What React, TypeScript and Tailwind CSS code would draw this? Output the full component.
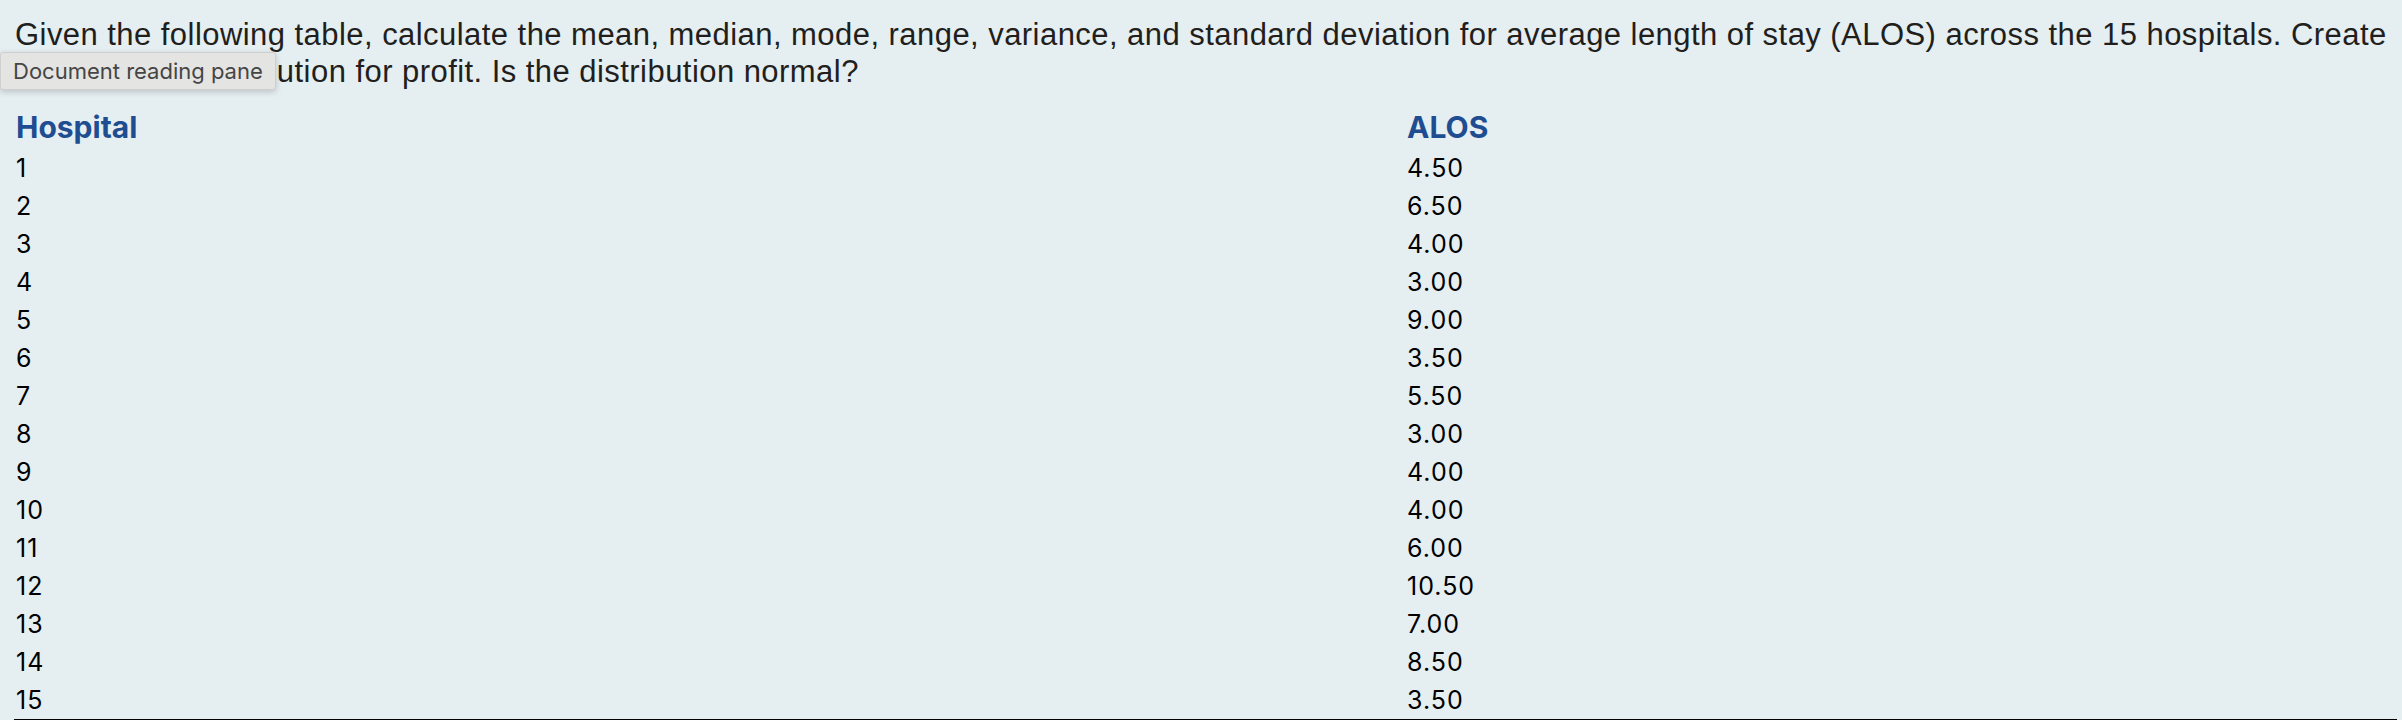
import React from "react";

const rows: [string, string][] = [
  ["1", "4.50"],
  ["2", "6.50"],
  ["3", "4.00"],
  ["4", "3.00"],
  ["5", "9.00"],
  ["6", "3.50"],
  ["7", "5.50"],
  ["8", "3.00"],
  ["9", "4.00"],
  ["10", "4.00"],
  ["11", "6.00"],
  ["12", "10.50"],
  ["13", "7.00"],
  ["14", "8.50"],
  ["15", "3.50"],
];

export default function App() {
  return (
    <div className="relative w-[2402px] h-[720px] overflow-hidden bg-[#e5eef1]">
      <div className="pl-[15px] pt-[16px]">
        <p className="w-[2378px] text-[31px] tracking-[0.45px] leading-[37px] text-[#221e1c] font-['Liberation_Sans',Arial,sans-serif]">
          Given the following table, calculate the mean, median, mode, range, variance, and standard deviation for
          average length of stay (ALOS) across the 15 hospitals. Create a frequency distribution for profit. Is the
          distribution normal?
        </p>
        <div className="mt-[18px] w-[2383px] -ml-[1px] font-['Inter',sans-serif]">
          <div className="flex h-[41px] text-[30px] leading-[38px] font-bold text-[#1f4d92]">
            <div className="w-[1393px] pl-[2px]">Hospital</div>
            <div className="flex-1">ALOS</div>
          </div>
          {rows.map(([h, a], i) => (
            <div
              key={h}
              className={
                "flex h-[38px] box-content text-[25px] tracking-[1px] leading-[38px] text-black " +
                (i === rows.length - 1 ? "border-b-2 border-black" : "")
              }
            >
              <div className="w-[1393px] pl-[2px]">{h}</div>
              <div className="flex-1">{a}</div>
            </div>
          ))}
        </div>
      </div>
      <div className="absolute left-0 top-[52px] w-[276px] h-[38px] flex items-center pl-[12px] bg-[#e4e4e3] border border-[#cfcfcf] rounded-[3px] shadow-[0_2px_6px_rgba(0,0,0,0.18)] text-[22px] text-[#454545] font-['Inter',sans-serif]">
        Document reading pane
      </div>
    </div>
  );
}
